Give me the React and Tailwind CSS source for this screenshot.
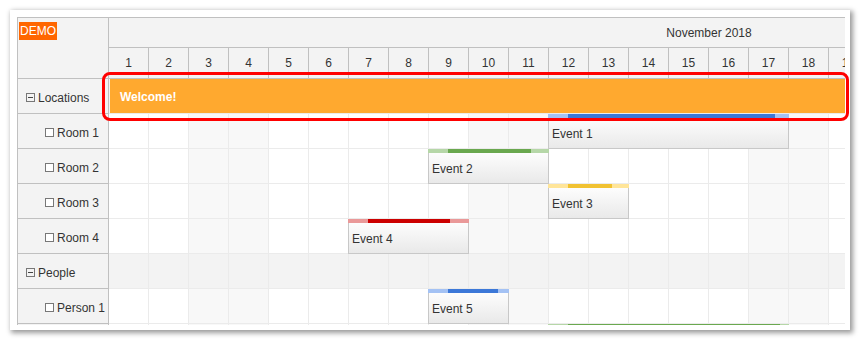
import React from "react";

const days = Array.from({ length: 19 }, (_, i) => i + 1);
const weekends = [3, 4, 10, 11, 17, 18];

const rows = [
  { name: "Locations", parent: true, welcome: true },
  { name: "Room 1", events: [{ id: 1, text: "Event 1", start: 12, len: 6, dark: "#3c78d8", light: "#a4c2f4", from: 20, to: 227 }] },
  { name: "Room 2", events: [{ id: 2, text: "Event 2", start: 9, len: 3, dark: "#6aa84f", light: "#b6d7a8", from: 20, to: 103 }] },
  { name: "Room 3", events: [{ id: 3, text: "Event 3", start: 12, len: 2, dark: "#f1c232", light: "#ffe599", from: 20, to: 64 }] },
  { name: "Room 4", events: [{ id: 4, text: "Event 4", start: 7, len: 3, dark: "#cc0000", light: "#ea9999", from: 20, to: 102 }] },
  { name: "People", parent: true },
  { name: "Person 1", events: [{ id: 5, text: "Event 5", start: 9, len: 2, dark: "#3c78d8", light: "#a4c2f4", from: 20, to: 70 }] },
  // next row is scrolled out of view, only the top of its event bar shows
  { name: "", events: [{ id: 6, text: "", start: 12, len: 6, dark: "#6aa84f", light: "#b6d7a8", from: 20, to: 232 }] },
];

const Event = ({ ev }) => {
  return (
    <div
      className="absolute top-0 h-[35px] flex flex-col"
      style={{ left: (ev.start - 1) * 40 - 1, width: ev.len * 40 + 1 }}
    >
      <div className="relative h-[4px] w-full" style={{ background: ev.light }}>
        <div
          className="absolute top-0 h-[4px]"
          style={{ left: ev.from, width: ev.to - ev.from, background: ev.dark }}
        />
      </div>
      <div className="flex-1 flex items-center pl-[3px] pt-px border-x border-b border-[#c8c8c8] bg-linear-to-b from-[#fdfdfd] to-[#e9e9e9] text-[12px] text-[#333]">
        {ev.text}
      </div>
    </div>
  );
};

const RowHeader = ({ row }) => {
  return (
    <div
      className={
        "h-[35px] pt-[3px] border-b border-[#c0c0c0] bg-[#f3f3f3] flex items-center gap-[3px] text-[12px] text-[#333] " +
        (row.parent ? "pl-[8px]" : "pl-[27px]")
      }
    >
      {row.name &&
        (row.parent ? (
          <span className="relative w-[9px] h-[9px] border border-[#777] flex items-center justify-center">
            <span className="block w-[5px] h-px bg-[#444]" />
          </span>
        ) : (
          <span className="w-[9px] h-[9px] border border-[#777] bg-white" />
        ))}
      <span>{row.name}</span>
    </div>
  );
};

const GridRow = ({ row }) => {
  return (
    <div className="relative flex h-[35px]">
      {days.map((d) => (
        <div
          key={d}
          className={
            "w-[40px] shrink-0 h-[35px] border-r border-b border-[#ebebeb] " +
            (row.parent ? "bg-[#f3f3f3]" : weekends.includes(d) ? "bg-[#f8f8f8]" : "bg-white")
          }
        />
      ))}
      {row.welcome && (
        <div className="absolute left-[1px] top-0 h-[34px] w-[760px] bg-[#ffa92f] flex items-center pl-[10px] pt-[2px] text-white font-bold text-[12px]">
          Welcome!
        </div>
      )}
      {row.events && row.events.map((ev) => <Event key={ev.id} ev={ev} />)}
    </div>
  );
};

export default function App() {
  return (
    <div className="p-[10px] bg-white font-['Liberation_Sans',Arial,sans-serif]">
      <div className="relative w-[840px] h-[320px] bg-white p-[7px] shadow-[2px_2px_5px_1px_rgba(0,0,0,0.4)]">
        <div className="w-[828px] h-[308px] overflow-hidden border-t border-l border-[#c0c0c0] flex">
          {/* row headers */}
          <div className="w-[91px] shrink-0 border-r border-[#c0c0c0]">
            <div className="h-[61px] border-b border-[#c0c0c0] bg-[#f3f3f3]">
              <span className="inline-block ml-[1px] px-[1px] h-[18px] leading-[18px] bg-[#ff6600] text-white text-[12px]">
                DEMO
              </span>
            </div>
            {rows.map((r, i) => (
              <RowHeader key={i} row={r} />
            ))}
          </div>

          {/* timeline */}
          <div className="flex-1 overflow-hidden">
            <div className="h-[30px] w-[1200px] border-b border-[#c0c0c0] bg-[#f3f3f3] flex items-center justify-center text-[12px] text-[#333]">
              November 2018
            </div>
            <div className="flex h-[31px] bg-[#f3f3f3]">
              {days.map((d) => (
                <div
                  key={d}
                  className="w-[40px] shrink-0 h-[31px] border-r border-b border-[#c0c0c0] flex items-center justify-center text-[12px] text-[#333]"
                >
                  {d}
                </div>
              ))}
            </div>
            {rows.map((r, i) => (
              <GridRow key={i} row={r} />
            ))}
          </div>
        </div>

        {/* highlight around the welcome bar */}
        <div className="absolute left-[92px] top-[62px] w-[747px] h-[49px] border-[3px] border-[#ff0000] rounded-[8px] pointer-events-none" />
      </div>
    </div>
  );
}
